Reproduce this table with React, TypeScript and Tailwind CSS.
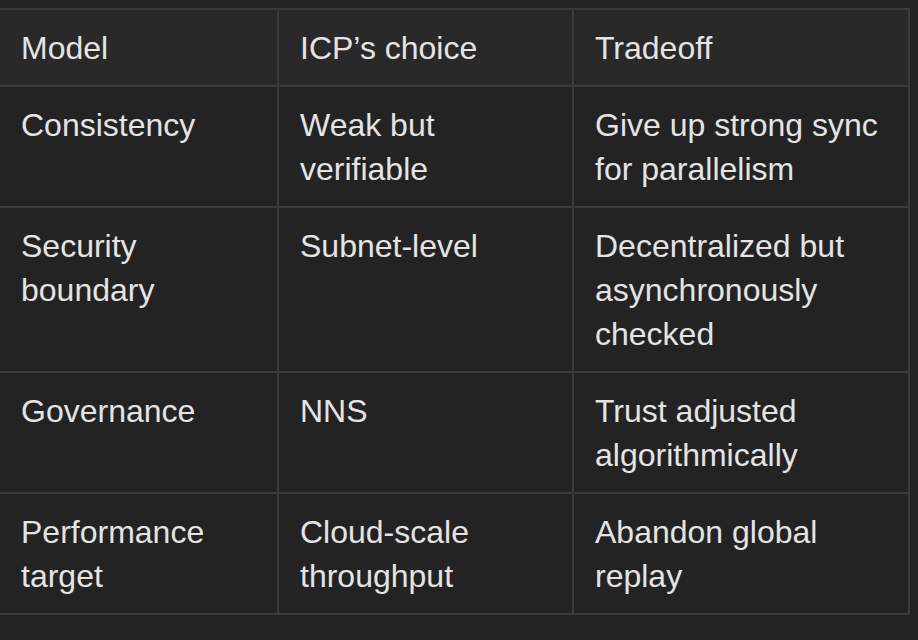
import React from "react";

const rows: string[][] = [
  ["Consistency", "Weak but\nverifiable", "Give up strong sync\nfor parallelism"],
  ["Security\nboundary", "Subnet-level", "Decentralized but\nasynchronously\nchecked"],
  ["Governance", "NNS", "Trust adjusted\nalgorithmically"],
  ["Performance\ntarget", "Cloud-scale\nthroughput", "Abandon global\nreplay"],
];

const Cell = ({ text, w }: { text: string; w: string }) => (
  <div className={`${w} border-r-2 border-[#3b3b3b] last:border-r-0 pl-[21px] pr-4 pt-[16px] pb-[15px] whitespace-pre-line`}>
    {text}
  </div>
);

export default function App() {
  return (
    <div
      className="w-[918px] h-[640px] bg-[#232323] pt-[8px] text-[#e4e4e4] text-[32px] leading-[44px]"
      style={{ fontFamily: '"Liberation Sans", Arial, sans-serif' }}
    >
      <div className="w-[910px] border-2 border-l-0 border-[#3b3b3b]">
        <div className="flex bg-[#292929] border-b-2 border-[#3b3b3b]">
          <Cell text="Model" w="w-[279px]" />
          <Cell text="ICP’s choice" w="w-[295px]" />
          <Cell text="Tradeoff" w="flex-1" />
        </div>
        {rows.map((r, i) => (
          <div key={i} className={`flex ${i < rows.length - 1 ? "border-b-2 border-[#3b3b3b]" : ""}`}>
            <Cell text={r[0]} w="w-[279px]" />
            <Cell text={r[1]} w="w-[295px]" />
            <Cell text={r[2]} w="flex-1" />
          </div>
        ))}
      </div>
    </div>
  );
}
